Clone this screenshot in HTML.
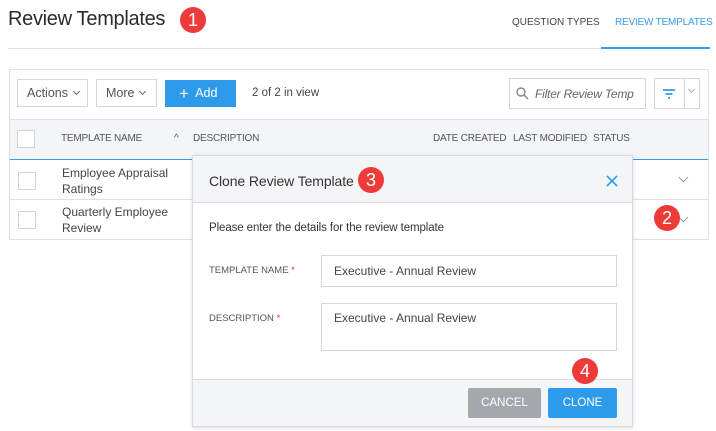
<!DOCTYPE html>
<html><head><meta charset="utf-8">
<style>
*{box-sizing:border-box;margin:0;padding:0}
body{width:716px;height:431px;background:#fff;font-family:"Liberation Sans",sans-serif;color:#333;position:relative;overflow:hidden}
.a{position:absolute}
.badge{position:absolute;width:26px;height:26px;border-radius:50%;background:#ef3a3a;color:#fff;font-size:18px;text-align:center;line-height:26px}
.btn{position:absolute;border:1px solid #d3d7dc;background:#fff;font-size:12.5px;color:#555;line-height:26px;padding-left:9px}
.cb{position:absolute;width:18px;height:18px;border:1px solid #d0d4d9;background:#fff}
.th{position:absolute;font-size:10px;color:#555;top:133px;letter-spacing:-0.2px}
.row{position:absolute;font-size:12px;color:#444;line-height:16px}
.chev{position:absolute;width:7px;height:7px;border-right:1.3px solid #999;border-bottom:1.3px solid #999;transform:rotate(45deg)}
.sc{display:inline-block;width:5px;height:5px;border-right:1.2px solid #666;border-bottom:1.2px solid #666;transform:rotate(45deg);margin-left:6px;vertical-align:3px}
</style></head><body>
<div class="a" style="left:8px;top:8px;font-size:20px;color:#2b2b2b;letter-spacing:-0.3px">Review Templates</div>
<div class="badge" style="left:180px;top:7px">1</div>
<div class="a" style="left:512px;top:17px;font-size:10px;color:#444">QUESTION TYPES</div>
<div class="a" style="left:615px;top:17px;font-size:10px;color:#3a9ae8;letter-spacing:-0.2px">REVIEW TEMPLATES</div>
<div class="a" style="left:8px;top:48px;width:702px;height:1px;background:#dde1e5"></div>
<div class="a" style="left:601px;top:47px;width:109px;height:2px;background:#3a9ae8"></div>

<div class="a" style="left:9px;top:69px;width:700px;height:171px;border:1px solid #dde1e5"></div>
<div class="btn" style="left:17px;top:79px;width:71px;height:28px">Actions<span class="sc"></span></div>
<div class="btn" style="left:96px;top:79px;width:61px;height:28px">More<span class="sc"></span></div>
<div class="a" style="left:165px;top:80px;width:71px;height:27px;background:#2e9bea;color:#fff;font-size:12.5px;line-height:27px;padding-left:14px"><span style="font-size:17px;vertical-align:-2px">+</span>&nbsp; Add</div>
<div class="a" style="left:252px;top:87px;font-size:11.5px;color:#444">2 of 2 in view</div>
<div class="a" style="left:509px;top:78px;width:137px;height:31px;border:1px solid #d3d7dc"></div>
<svg class="a" style="left:516px;top:87px" width="13" height="13"><circle cx="5" cy="5" r="4" stroke="#888" stroke-width="1.4" fill="none"/><path d="M8 8l4 4" stroke="#888" stroke-width="1.5"/></svg>
<div class="a" style="left:535px;top:87px;font-size:12px;color:#666;font-style:italic;letter-spacing:-0.2px">Filter Review Temp</div>
<div class="a" style="left:654px;top:78px;width:46px;height:31px;border:1px solid #d3d7dc"></div>
<div class="a" style="left:684px;top:78px;width:1px;height:31px;background:#d3d7dc"></div>
<svg class="a" style="left:662px;top:88px" width="14" height="12"><path d="M1 2h12M3.5 6h7M6 10h2" stroke="#2e9bea" stroke-width="1.8"/></svg>
<div class="chev" style="left:689px;top:87px;width:5px;height:5px;border-color:#aaa"></div>

<div class="a" style="left:10px;top:119px;width:698px;height:40px;background:#f4f5f7;border-top:1px solid #dde1e5"></div>
<div class="a" style="left:10px;top:159px;width:698px;height:1px;background:#3a9ae8"></div>
<div class="cb" style="left:17px;top:130px;width:18px;height:18px"></div>
<div class="th" style="left:61px">TEMPLATE NAME</div>
<div class="th" style="left:174px">^</div>
<div class="th" style="left:193px">DESCRIPTION</div>
<div class="th" style="left:433px">DATE CREATED</div>
<div class="th" style="left:513px">LAST MODIFIED</div>
<div class="th" style="left:593px">STATUS</div>
<div class="cb" style="left:18px;top:172px"></div>
<div class="row" style="left:62px;top:165px">Employee Appraisal<br>Ratings</div>
<div class="a" style="left:10px;top:199px;width:698px;height:1px;background:#dde1e5"></div>
<div class="cb" style="left:18px;top:211px"></div>
<div class="row" style="left:62px;top:204px">Quarterly Employee<br>Review</div>
<div class="chev" style="left:680px;top:174px"></div>
<div class="chev" style="left:680px;top:214px"></div>
<div class="badge" style="left:654px;top:205px">2</div>

<div class="a" style="left:192px;top:155px;width:441px;height:272px;background:#fff;border:1px solid #d8dce0;box-shadow:0 1px 4px rgba(0,0,0,.15)"></div>
<div class="a" style="left:193px;top:156px;width:439px;height:47px;background:#f4f5f7;border-bottom:1px solid #d8dce0"></div>
<div class="a" style="left:209px;top:173px;font-size:14px;color:#333;letter-spacing:-0.1px">Clone Review Template</div>
<div class="badge" style="left:358px;top:167px">3</div>
<svg class="a" style="left:606px;top:175px" width="12" height="12"><path d="M1 1l10 10M11 1L1 11" stroke="#2e9bea" stroke-width="1.6"/></svg>
<div class="a" style="left:209px;top:222px;font-size:11.5px;color:#333;letter-spacing:-0.1px">Please enter the details for the review template</div>
<div class="a" style="left:209px;top:265px;font-size:9.5px;color:#555">TEMPLATE NAME <span style="color:#e33">*</span></div>
<div class="a" style="left:321px;top:255px;width:296px;height:32px;border:1px solid #d3d7dc;font-size:12px;color:#444;padding:8px 12px">Executive - Annual Review</div>
<div class="a" style="left:209px;top:313px;font-size:9.5px;color:#555">DESCRIPTION <span style="color:#e33">*</span></div>
<div class="a" style="left:321px;top:303px;width:296px;height:48px;border:1px solid #d3d7dc;font-size:12px;color:#444;padding:7px 12px">Executive - Annual Review</div>
<div class="a" style="left:193px;top:379px;width:439px;height:47px;background:#f4f5f7;border-top:1px solid #d8dce0"></div>
<div class="a" style="left:468px;top:388px;width:73px;height:30px;background:#a4a8ad;border-radius:2px;color:#fff;font-size:11.5px;text-align:center;line-height:30px">CANCEL</div>
<div class="a" style="left:548px;top:388px;width:69px;height:30px;background:#2e9bea;border-radius:2px;color:#fff;font-size:11.5px;text-align:center;line-height:30px">CLONE</div>
<div class="badge" style="left:572px;top:358px">4</div>
</body></html>
